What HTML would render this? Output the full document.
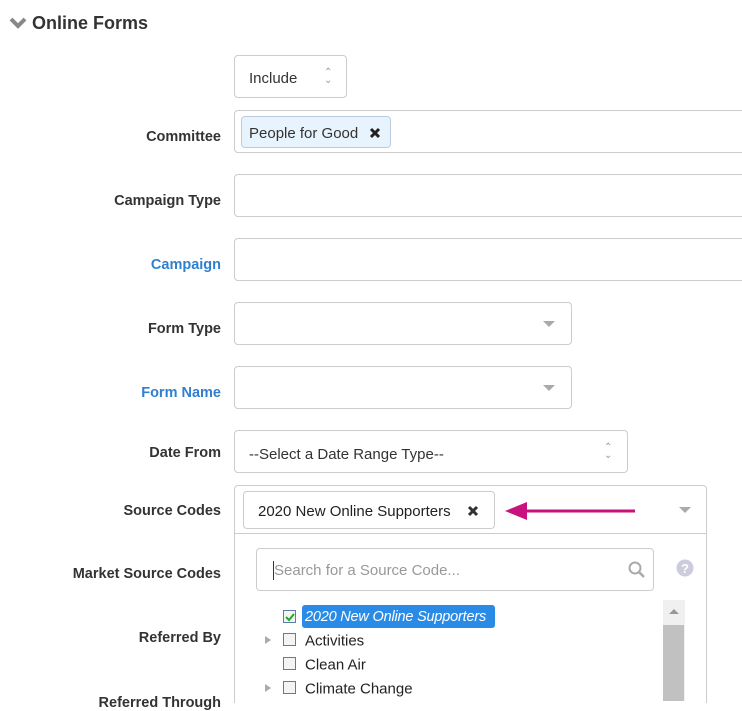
<!DOCTYPE html>
<html><head><style>
body{margin:0;width:742px;height:701px;overflow:hidden;background:#fff;font-family:"Liberation Sans",sans-serif;color:#333;position:relative}
.a{position:absolute}
.lbl{position:absolute;right:521px;font-size:14.5px;font-weight:bold;color:#333;white-space:nowrap;transform:translateY(-50%)}
.blue{color:#2f80d1}
.box{position:absolute;border:1px solid #ccc;border-radius:4px;background:#fff;box-sizing:border-box}
.caret{position:absolute;width:0;height:0;border-left:6px solid transparent;border-right:6px solid transparent;border-top:6px solid #aaa}
.cb{position:absolute;left:283px;width:13px;height:13px;border:1px solid #5a7ea8;background:#f4f4f4;box-sizing:border-box}
.it{position:absolute;left:305px;font-size:15px;color:#222;transform:translateY(-50%);white-space:nowrap}
.tri{position:absolute;left:265px;width:0;height:0;border-top:4px solid transparent;border-bottom:4px solid transparent;border-left:6px solid #aaa}
</style></head><body>
<svg class="a" style="left:9px;top:16px" width="18" height="14" viewBox="0 0 18 14"><path d="M2 3 L9 10 L16 3" stroke="#888" stroke-width="4" fill="none"/></svg>
<div class="a" style="left:32px;top:13px;font-size:18px;font-weight:bold;color:#333">Online Forms</div>

<div class="box" style="left:234px;top:55px;width:113px;height:43px"></div>
<div class="a" style="left:249px;top:70px;font-size:15px">Include</div>
<div class="a" style="left:324px;top:69px;font-size:10px;color:#999;line-height:8px">&#8963;<br>&#8964;</div>

<div class="lbl" style="top:137px">Committee</div>
<div class="box" style="left:234px;top:110px;width:520px;height:43px"></div>
<div class="a" style="left:241px;top:116px;width:150px;height:32px;border:1px solid #bcd;border-radius:4px;background:#e8f4fd;box-sizing:border-box"></div>
<div class="a" style="left:249px;top:125px;font-size:15px;color:#333">People for Good</div>
<svg class="a" style="left:369px;top:127px" width="12" height="12"><path d="M2 2 L10 10 M10 2 L2 10" stroke="#222" stroke-width="3"/></svg>

<div class="lbl" style="top:201px">Campaign Type</div>
<div class="box" style="left:234px;top:174px;width:520px;height:43px"></div>
<div class="lbl blue" style="top:265px">Campaign</div>
<div class="box" style="left:234px;top:238px;width:520px;height:43px"></div>

<div class="lbl" style="top:329px">Form Type</div>
<div class="box" style="left:234px;top:302px;width:338px;height:43px"></div>
<div class="caret" style="left:543px;top:321px"></div>
<div class="lbl blue" style="top:393px">Form Name</div>
<div class="box" style="left:234px;top:366px;width:338px;height:43px"></div>
<div class="caret" style="left:543px;top:385px"></div>

<div class="lbl" style="top:453px">Date From</div>
<div class="box" style="left:234px;top:430px;width:394px;height:43px"></div>
<div class="a" style="left:249px;top:446px;font-size:15px">--Select a Date Range Type--</div>
<div class="a" style="left:604px;top:444px;font-size:10px;color:#999;line-height:8px">&#8963;<br>&#8964;</div>

<div class="lbl" style="top:511px">Source Codes</div>
<div class="box" style="left:234px;top:485px;width:473px;height:49px;border-radius:4px 4px 0 0"></div>
<div class="a" style="left:243px;top:491px;width:252px;height:38px;border:1px solid #ccc;border-radius:4px;box-sizing:border-box"></div>
<div class="a" style="left:258px;top:503px;font-size:15px;color:#222">2020 New Online Supporters</div>
<svg class="a" style="left:467px;top:505px" width="12" height="12"><path d="M2 2 L10 10 M10 2 L2 10" stroke="#333" stroke-width="3"/></svg>
<svg class="a" style="left:505px;top:500px" width="132" height="22"><path d="M20 11 H130" stroke="#c8127e" stroke-width="3"/><path d="M0 11 L22 2 L22 20 Z" fill="#c8127e"/></svg>
<div class="caret" style="left:679px;top:507px"></div>
<div class="a" style="left:234px;top:533px;width:473px;height:170px;border-left:1px solid #ccc;border-right:1px solid #ccc;box-sizing:border-box"></div>

<div class="lbl" style="top:574px">Market Source Codes</div>
<div class="box" style="left:256px;top:548px;width:398px;height:43px"></div>
<div class="a" style="left:273px;top:561px;width:1px;height:19px;background:#333"></div>
<div class="a" style="left:274px;top:562px;font-size:15px;color:#999">Search for a Source Code...</div>
<svg class="a" style="left:628px;top:561px" width="18" height="18"><circle cx="7" cy="7" r="5.5" stroke="#aaa" stroke-width="2" fill="none"/><path d="M11 11 L16 16" stroke="#aaa" stroke-width="2.5"/></svg>
<svg class="a" style="left:676px;top:559px" width="18" height="18"><circle cx="9" cy="9" r="8.5" fill="#ccd"/><text x="9" y="14" font-size="13" font-weight="bold" fill="#fff" text-anchor="middle" font-family="Liberation Sans">?</text></svg>

<div class="lbl" style="top:638px">Referred By</div>
<div class="lbl" style="top:703px">Referred Through</div>

<div class="a" style="left:663px;top:600px;width:22px;height:101px;background:#f0f0f0"></div>
<div class="a" style="left:663px;top:625px;width:21px;height:76px;background:#c1c1c1"></div>
<div class="a" style="left:669px;top:609px;width:0;height:0;border-left:5px solid transparent;border-right:5px solid transparent;border-bottom:5px solid #999"></div>

<div class="cb" style="top:610px"></div>
<svg class="a" style="left:284px;top:611px" width="12" height="12"><path d="M2 6 L5 9 L10 3" stroke="#2a2" stroke-width="2" fill="none"/></svg>
<div class="a" style="left:302px;top:605px;width:193px;height:23px;background:#2a8be6;border-radius:3px"></div>
<div class="it" style="top:617px;color:#fff;font-style:italic;font-size:14.5px;letter-spacing:-0.2px">2020 New Online Supporters</div>
<div class="tri" style="top:636px"></div>
<div class="cb" style="top:633px"></div><div class="it" style="top:641px">Activities</div>
<div class="cb" style="top:657px"></div><div class="it" style="top:665px">Clean Air</div>
<div class="tri" style="top:684px"></div>
<div class="cb" style="top:681px"></div><div class="it" style="top:689px">Climate Change</div>
</body></html>
